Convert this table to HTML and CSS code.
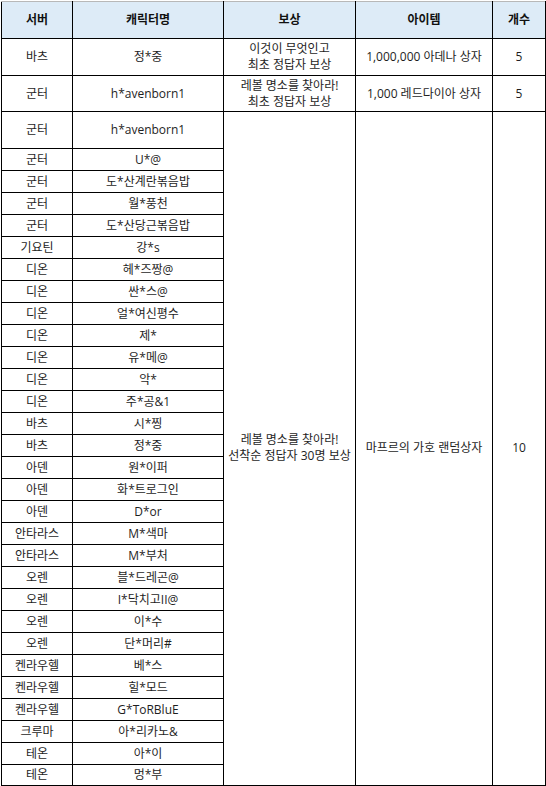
FILE: index.html
```html
<!DOCTYPE html>
<html lang="ko">
<head>
<meta charset="utf-8">
<link rel="stylesheet" href="styles.css">
</head>
<body>
<table class="winners">
  <colgroup>
    <col class="c-server">
    <col class="c-name">
    <col class="c-reward">
    <col class="c-item">
    <col class="c-count">
  </colgroup>
  <thead>
    <tr class="head"><th>서버</th><th>캐릭터명</th><th>보상</th><th>아이템</th><th>개수</th></tr>
  </thead>
  <tbody>
    <tr class="tall"><td>바츠</td><td>정*중</td><td>이것이 무엇인고<br>최초 정답자 보상</td><td>1,000,000 아데나 상자</td><td>5</td></tr>
    <tr class="tall2"><td>군터</td><td>h*avenborn1</td><td>레볼 명소를 찾아라!<br>최초 정답자 보상</td><td>1,000 레드다이아 상자</td><td>5</td></tr>
    <tr class="tall"><td>군터</td><td>h*avenborn1</td><td rowspan="30">레볼 명소를 찾아라!<br>선착순 정답자 30명 보상</td><td rowspan="30">마프르의 가호 랜덤상자</td><td rowspan="30">10</td></tr>
    <tr><td>군터</td><td>U*@</td></tr>
    <tr><td>군터</td><td>도*산계란볶음밥</td></tr>
    <tr><td>군터</td><td>월*풍천</td></tr>
    <tr><td>군터</td><td>도*산당근볶음밥</td></tr>
    <tr><td>기요틴</td><td>강*s</td></tr>
    <tr><td>디온</td><td>헤*즈짱@</td></tr>
    <tr><td>디온</td><td>싼*스@</td></tr>
    <tr><td>디온</td><td>얼*여신평수</td></tr>
    <tr><td>디온</td><td>제*</td></tr>
    <tr><td>디온</td><td>유*메@</td></tr>
    <tr><td>디온</td><td>악*</td></tr>
    <tr><td>디온</td><td>주*공&amp;1</td></tr>
    <tr><td>바츠</td><td>시*찡</td></tr>
    <tr><td>바츠</td><td>정*중</td></tr>
    <tr><td>아덴</td><td>원*이퍼</td></tr>
    <tr><td>아덴</td><td>화*트로그인</td></tr>
    <tr><td>아덴</td><td>D*or</td></tr>
    <tr><td>안타라스</td><td>M*색마</td></tr>
    <tr><td>안타라스</td><td>M*부처</td></tr>
    <tr><td>오렌</td><td>블*드레곤@</td></tr>
    <tr><td>오렌</td><td>I*닥치고II@</td></tr>
    <tr><td>오렌</td><td>이*수</td></tr>
    <tr><td>오렌</td><td>단*머리#</td></tr>
    <tr><td>켄라우헬</td><td>베*스</td></tr>
    <tr><td>켄라우헬</td><td>힐*모드</td></tr>
    <tr><td>켄라우헬</td><td>G*ToRBluE</td></tr>
    <tr><td>크루마</td><td>아*리카노&amp;</td></tr>
    <tr><td>테온</td><td>아*이</td></tr>
    <tr class="last"><td>테온</td><td>멍*부</td></tr>
  </tbody>
</table>
</body>
</html>
```

FILE: styles.css
```css
html, body {
  margin: 0;
  padding: 0;
  background: #ffffff;
}
body {
  padding: 1px 0 0 1px;
  font-family: "Open Sans", "Noto Sans CJK KR", sans-serif;
  font-size: 12px;
  color: #1e1e1e;
}
.winners {
  border-collapse: collapse;
  table-layout: fixed;
  width: 544px;
}
.c-server { width: 71px; }
.c-name { width: 151px; }
.c-reward { width: 132px; }
.c-item { width: 137px; }
.c-count { width: 53px; }

.winners th,
.winners td {
  border: 1px solid #000000;
  padding: 0 2px;
  text-align: center;
  vertical-align: middle;
  line-height: 16px;
  box-sizing: border-box;
  white-space: nowrap;
}
.winners th {
  background: #ddebf7;
  font-weight: bold;
  color: #111111;
}
.winners thead tr.head th {
  height: 37px;
  border-top-color: #b8b8b8;
}
.winners tr td {
  height: 22px;
}
.winners tr.tall td { height: 37px; }
.winners tr.tall2 td { height: 36px; }
.winners tr.last td { height: 21px; }
.winners tr.last td,
.winners td[rowspan] {
  border-bottom-width: 2px;
}
```
